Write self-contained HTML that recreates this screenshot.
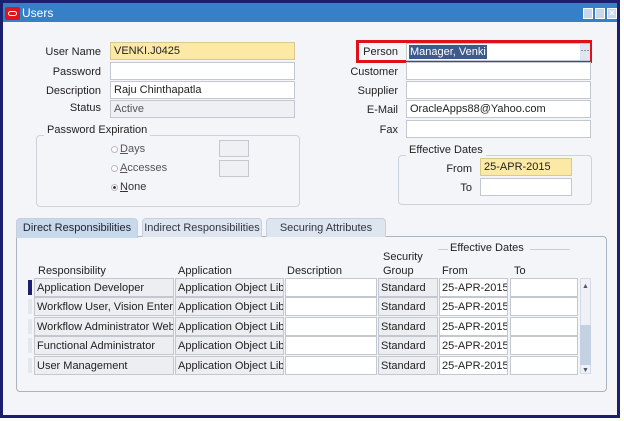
<!DOCTYPE html>
<html><head><meta charset="utf-8"><style>
*{box-sizing:border-box;margin:0;padding:0}
body{width:624px;height:421px;overflow:hidden;background:#fff;font-family:"Liberation Sans",sans-serif;font-size:11px;color:#222;position:relative;line-height:13px}
.a{position:absolute;white-space:nowrap}
.win{left:0;top:0;width:620px;height:418px;border:3px solid #1b1f6e;background:#f3f5f9}
.title{left:3px;top:3px;width:614px;height:19px;background:#3580c6}
.in{position:absolute;height:18px;background:#fff;border:1px solid #c3c8d0;padding:2px 3px;white-space:nowrap;overflow:hidden}
.y{background:#fde9a6;border-color:#d9c98e}
.g{background:#eef0f3}
.lb{position:absolute;text-align:right;width:90px}
.grp{position:absolute;border:1px solid #cdd3dc;border-radius:4px}
.gt{position:absolute;background:#f3f5f9;padding:0 3px}
.rd{position:absolute;width:7px;height:7px;border-radius:50%;border:1px solid #bbb;background:#fff}
.tab{position:absolute;top:218px;height:19px;border:1px solid #c6d0dc;border-bottom:none;border-radius:4px 4px 0 0;background:#dde6ef;padding:3px 0;text-align:center;color:#334;white-space:nowrap}
.c{position:absolute;height:19px;border:1px solid #c3c8d0;padding:3px 2px;white-space:nowrap;overflow:hidden;background:#eceef2}
.w{background:#fff}
</style></head><body>
<div class="a win"></div>
<div class="a title"></div>
<div class="a" style="left:5px;top:7px;width:15px;height:13px;background:#e0141e;border-radius:2px"></div>
<div class="a" style="left:8px;top:11px;width:9px;height:5px;border:1.5px solid #fff;border-radius:3px"></div>
<div class="a" style="left:22px;top:7px;color:#fff;font-size:12px">Users</div>
<div class="a" style="left:583px;top:8px;width:10px;height:11px;background:#c8d8ea;border:1px solid #fff"></div>
<div class="a" style="left:595px;top:8px;width:10px;height:11px;background:#c8d8ea;border:1px solid #fff"></div>
<div class="a" style="left:607px;top:8px;width:10px;height:11px;background:#c8d8ea;border:1px solid #fff;font-size:9px;line-height:9px;text-align:center;color:#fff">✕</div>

<div class="lb" style="left:11px;top:46px">User Name</div>
<div class="lb" style="left:11px;top:66px">Password</div>
<div class="lb" style="left:11px;top:85px">Description</div>
<div class="lb" style="left:11px;top:102px">Status</div>
<div class="in y" style="left:110px;top:42px;width:185px">VENKI.J0425</div>
<div class="in" style="left:110px;top:62px;width:185px"></div>
<div class="in" style="left:110px;top:81px;width:185px">Raju Chinthapatla</div>
<div class="in g" style="left:110px;top:100px;width:185px;color:#555">Active</div>

<div class="grp" style="left:36px;top:135px;width:264px;height:72px"></div>
<div class="gt" style="left:44px;top:124px">Password Expiration</div>
<div class="rd" style="left:111px;top:146px"></div><div class="a" style="left:120px;top:143px;color:#555"><u>D</u>ays</div>
<div class="rd" style="left:111px;top:165px"></div><div class="a" style="left:120px;top:162px;color:#555"><u>A</u>ccesses</div>
<div class="rd" style="left:111px;top:184px;background:radial-gradient(#333 35%,#fff 45%)"></div><div class="a" style="left:120px;top:181px;color:#333"><u>N</u>one</div>
<div class="in g" style="left:219px;top:140px;width:30px;height:17px"></div>
<div class="in g" style="left:219px;top:160px;width:30px;height:17px"></div>

<div class="a" style="left:356px;top:40px;width:236px;height:23px;border:3px solid #e0101a"></div>
<div class="lb" style="left:308px;top:46px">Person</div>
<div class="in" style="left:406px;top:43px;width:184px;padding:2px 2px"><span style="background:#3d5a8c;color:#fff;padding:1px 1px">Manager, Venki</span></div>
<div class="a" style="left:580px;top:44px;width:10px;height:16px;background:#dfe6ef;font-size:9px;text-align:center;line-height:12px">···</div>
<div class="lb" style="left:308px;top:66px">Customer</div>
<div class="lb" style="left:308px;top:85px">Supplier</div>
<div class="lb" style="left:308px;top:104px">E-Mail</div>
<div class="lb" style="left:308px;top:124px">Fax</div>
<div class="in" style="left:406px;top:62px;width:185px"></div>
<div class="in" style="left:406px;top:81px;width:185px"></div>
<div class="in" style="left:406px;top:100px;width:185px">OracleApps88@Yahoo.com</div>
<div class="in" style="left:406px;top:120px;width:185px"></div>

<div class="grp" style="left:398px;top:155px;width:194px;height:50px"></div>
<div class="gt" style="left:406px;top:144px">Effective Dates</div>
<div class="lb" style="left:382px;top:163px">From</div>
<div class="lb" style="left:382px;top:182px">To</div>
<div class="in y" style="left:480px;top:158px;width:92px">25-APR-2015</div>
<div class="in" style="left:480px;top:178px;width:92px"></div>

<div class="a" style="left:16px;top:236px;width:591px;height:156px;border:1px solid #a8b4c4;border-radius:0 4px 4px 4px"></div>
<div class="tab" style="left:16px;width:122px;background:#c7d9ea;color:#223;height:20px">Direct Responsibilities</div>
<div class="tab" style="left:142px;width:120px">Indirect Responsibilities</div>
<div class="tab" style="left:266px;width:120px">Securing Attributes</div>

<div class="a" style="left:38px;top:265px">Responsibility</div>
<div class="a" style="left:178px;top:265px">Application</div>
<div class="a" style="left:287px;top:265px">Description</div>
<div class="a" style="left:383px;top:251px">Security</div>
<div class="a" style="left:383px;top:265px">Group</div>
<div class="a" style="left:442px;top:265px">From</div>
<div class="a" style="left:514px;top:265px">To</div>
<div class="a" style="left:438px;top:249px;width:10px;border-top:1px solid #ccc"></div>
<div class="a" style="left:450px;top:242px">Effective Dates</div>
<div class="a" style="left:530px;top:249px;width:40px;border-top:1px solid #ccc"></div>

<div class="a" style="left:28px;top:280px;width:4px;height:15px;background:#1b1f6e"></div>
<div class="a" style="left:28px;top:299px;width:4px;height:15px;background:#e3e7ee"></div>
<div class="a" style="left:28px;top:319px;width:4px;height:15px;background:#e3e7ee"></div>
<div class="a" style="left:28px;top:338px;width:4px;height:15px;background:#e3e7ee"></div>
<div class="a" style="left:28px;top:358px;width:4px;height:15px;background:#e3e7ee"></div>

<div class="c" style="left:34px;top:278px;width:140px">Application Developer</div>
<div class="c" style="left:34px;top:297px;width:140px">Workflow User, Vision Enterp</div>
<div class="c" style="left:34px;top:317px;width:140px">Workflow Administrator Web</div>
<div class="c" style="left:34px;top:336px;width:140px">Functional Administrator</div>
<div class="c" style="left:34px;top:356px;width:140px">User Management</div>
<div class="c" style="left:175px;top:278px;width:109px">Application Object Libr</div>
<div class="c" style="left:175px;top:297px;width:109px">Application Object Libr</div>
<div class="c" style="left:175px;top:317px;width:109px">Application Object Libr</div>
<div class="c" style="left:175px;top:336px;width:109px">Application Object Libr</div>
<div class="c" style="left:175px;top:356px;width:109px">Application Object Libr</div>
<div class="c w" style="left:285px;top:278px;width:92px"></div>
<div class="c w" style="left:285px;top:297px;width:92px"></div>
<div class="c w" style="left:285px;top:317px;width:92px"></div>
<div class="c w" style="left:285px;top:336px;width:92px"></div>
<div class="c w" style="left:285px;top:356px;width:92px"></div>
<div class="c" style="left:378px;top:278px;width:60px">Standard</div>
<div class="c" style="left:378px;top:297px;width:60px">Standard</div>
<div class="c" style="left:378px;top:317px;width:60px">Standard</div>
<div class="c" style="left:378px;top:336px;width:60px">Standard</div>
<div class="c" style="left:378px;top:356px;width:60px">Standard</div>
<div class="c w" style="left:439px;top:278px;width:69px">25-APR-2015</div>
<div class="c w" style="left:439px;top:297px;width:69px">25-APR-2015</div>
<div class="c w" style="left:439px;top:317px;width:69px">25-APR-2015</div>
<div class="c w" style="left:439px;top:336px;width:69px">25-APR-2015</div>
<div class="c w" style="left:439px;top:356px;width:69px">25-APR-2015</div>
<div class="c w" style="left:510px;top:278px;width:68px"></div>
<div class="c w" style="left:510px;top:297px;width:68px"></div>
<div class="c w" style="left:510px;top:317px;width:68px"></div>
<div class="c w" style="left:510px;top:336px;width:68px"></div>
<div class="c w" style="left:510px;top:356px;width:68px"></div>
<div class="a" style="left:580px;top:278px;width:11px;height:96px;background:#eef1f5;border:1px solid #d5dbe3"></div>
<div class="a" style="left:580px;top:325px;width:11px;height:40px;background:#c3d1e2"></div>
<div class="a" style="left:582px;top:280px;font-size:7px;color:#556">▲</div>
<div class="a" style="left:582px;top:364px;font-size:7px;color:#556">▼</div>
</body></html>
